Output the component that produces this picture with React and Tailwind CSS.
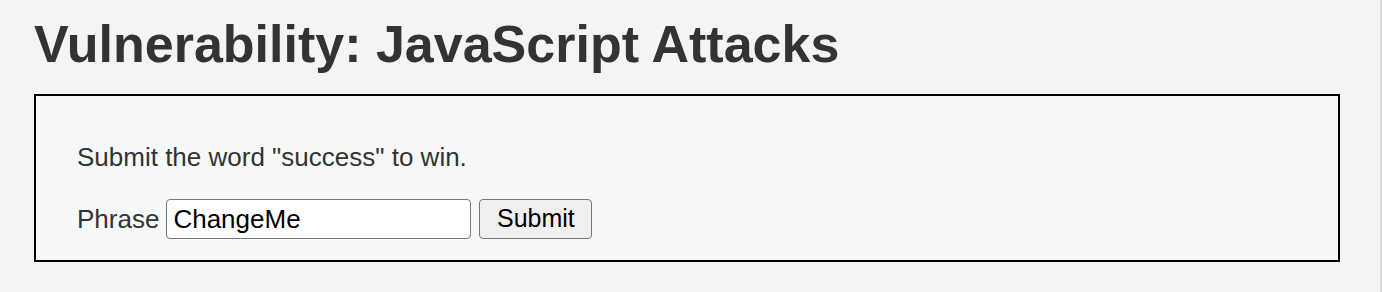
import React from 'react';

const App = () => {
  return (
    <div className="flex min-h-[292px] w-full bg-[#f4f4f4]" style={{ fontFamily: '"Liberation Sans", Arial, sans-serif' }}>
      <div className="flex-1 pl-[34px] pr-[40px]">
        <h1 className="pt-[12px] text-[52px] font-bold leading-[64px] text-[#333]">Vulnerability: JavaScript Attacks</h1>
        <div className="mt-[18px] h-[168px] border-2 border-black bg-[#f7f9f8] px-[41px] pt-[46px]">
          <p className="text-[26px] leading-[30px] text-[#333]">Submit the word "success" to win.</p>
          <form className="mt-[27px] flex items-center" onSubmit={(e) => e.preventDefault()}>
            <label className="mr-[7px] text-[26px] leading-[30px] text-[#333]">Phrase</label>
            <input
              type="text"
              defaultValue="ChangeMe"
              className="h-[40px] w-[305px] rounded-[4px] border border-[#767676] bg-white px-[6px] text-[26px] text-black outline-none"
            />
            <button className="ml-[8px] h-[40px] w-[113px] rounded-[4px] border border-[#767676] bg-[#efefef] text-[25px] text-black">
              Submit
            </button>
          </form>
        </div>
      </div>
      <div className="w-[2px] bg-[#dcdcdc]" />
    </div>
  );
};

export default App;
